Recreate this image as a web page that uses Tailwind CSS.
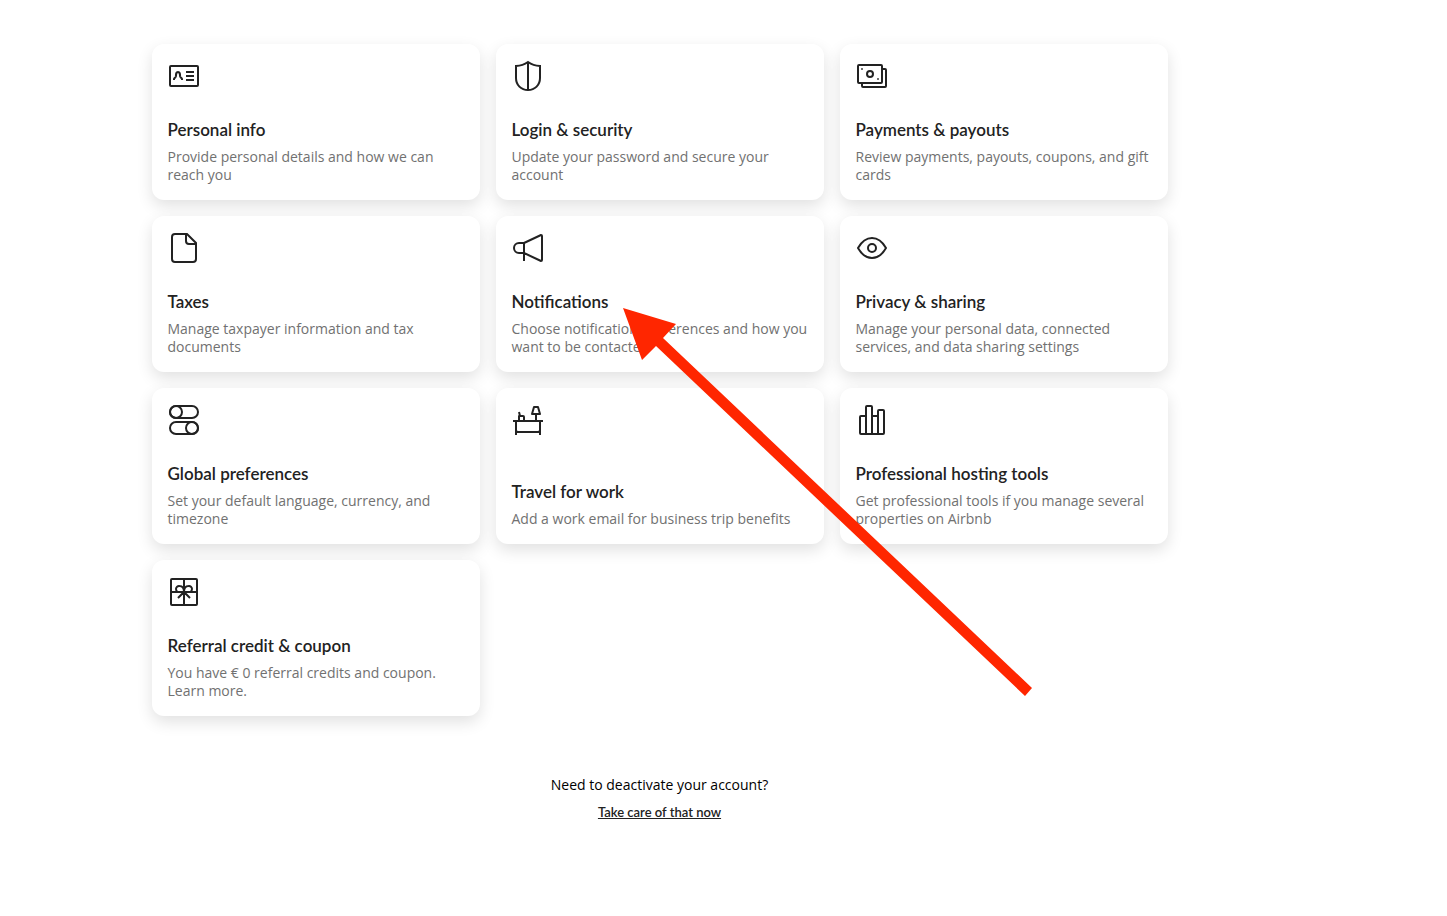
<!DOCTYPE html>
<html lang="en">
<head>
<meta charset="UTF-8">
<meta name="viewport" content="width=device-width, initial-scale=1.0">
<title>Account settings</title>
<script src="https://cdn.jsdelivr.net/npm/@tailwindcss/browser@4"></script>
</head>
<body class="bg-white pr-32 font-['Open_Sans',sans-serif] text-[#222222]">
<main class="relative mx-auto max-w-[1016px] pt-11 pb-24">
  <div class="grid grid-cols-3 gap-4">

    <a href="#" class="flex min-h-39 flex-col justify-between rounded-xl bg-white p-4 shadow-[0_6px_16px_rgba(0,0,0,0.12)]">
      <svg class="size-8" viewBox="0 0 32 32" fill="none" stroke="currentColor" stroke-width="2" aria-hidden="true">
        <rect x="2" y="6" width="28" height="20" rx="1"/>
        <path d="M6 20v-1c0-1 1.700-1.200 1.900-2.600C8 13.500 8 12 10 12s2 1.500 2.100 4.400C12.300 17.800 14 18 14 19v1M18 12h8M18 16h8M18 20h8"/>
      </svg>
      <div>
        <h2 class="font-['Lato',sans-serif] text-[17px]/5 font-semibold">Personal info</h2>
        <p class="mt-2 text-sm/[18px] text-[#717171]">Provide personal details and how we can reach you</p>
      </div>
    </a>

    <a href="#" class="flex min-h-39 flex-col justify-between rounded-xl bg-white p-4 shadow-[0_6px_16px_rgba(0,0,0,0.12)]">
      <svg class="size-8" viewBox="0 0 32 32" fill="none" stroke="currentColor" stroke-width="2" aria-hidden="true">
        <path d="M16 2c-3.500 2.500-7.500 3.800-12 4v12c0 7 5 12 12 12s12-5 12-12V6c-4.500-.2-8.500-1.500-12-4zM16 2v28"/>
      </svg>
      <div>
        <h2 class="font-['Lato',sans-serif] text-[17px]/5 font-semibold">Login &amp; security</h2>
        <p class="mt-2 text-sm/[18px] text-[#717171]">Update your password and secure your account</p>
      </div>
    </a>

    <a href="#" class="flex min-h-39 flex-col justify-between rounded-xl bg-white p-4 shadow-[0_6px_16px_rgba(0,0,0,0.12)]">
      <svg class="size-8" viewBox="0 0 32 32" fill="none" stroke="currentColor" stroke-width="2" aria-hidden="true">
        <rect x="2" y="5" width="24" height="18" rx="1"/>
        <path d="M26 9h3a1 1 0 0 1 1 1v16a1 1 0 0 1-1 1H7a1 1 0 0 1-1-1v-3"/>
        <circle cx="14" cy="14" r="3"/>
        <path d="M5 9h2M21 19h2" stroke="#717171"/>
      </svg>
      <div>
        <h2 class="font-['Lato',sans-serif] text-[17px]/5 font-semibold">Payments &amp; payouts</h2>
        <p class="mt-2 text-sm/[18px] text-[#717171]">Review payments, payouts, coupons, and gift cards</p>
      </div>
    </a>

    <a href="#" class="flex min-h-39 flex-col justify-between rounded-xl bg-white p-4 shadow-[0_6px_16px_rgba(0,0,0,0.12)]">
      <svg class="size-8" viewBox="0 0 32 32" fill="none" stroke="currentColor" stroke-width="2" aria-hidden="true">
        <path d="M19 2H7a3 3 0 0 0-3 3v22a3 3 0 0 0 3 3h18a3 3 0 0 0 3-3V11zM18 2v7a3 3 0 0 0 3 3h7"/>
      </svg>
      <div>
        <h2 class="font-['Lato',sans-serif] text-[17px]/5 font-semibold">Taxes</h2>
        <p class="mt-2 text-sm/[18px] text-[#717171]">Manage taxpayer information and tax documents</p>
      </div>
    </a>

    <a href="#" class="flex min-h-39 flex-col justify-between rounded-xl bg-white p-4 shadow-[0_6px_16px_rgba(0,0,0,0.12)]">
      <svg class="size-8" viewBox="0 0 32 32" fill="none" stroke="currentColor" stroke-width="2" stroke-linejoin="round" aria-hidden="true">
        <path d="M12 11H7a5 5 0 0 0 0 10h5M12 10v19M12 11l17-8a1 1 0 0 1 1 1v24a1 1 0 0 1-1 1l-17-8"/>
      </svg>
      <div>
        <h2 class="font-['Lato',sans-serif] text-[17px]/5 font-semibold">Notifications</h2>
        <p class="mt-2 text-sm/[18px] text-[#717171]">Choose notification preferences and how you want to be contacted</p>
      </div>
    </a>

    <a href="#" class="flex min-h-39 flex-col justify-between rounded-xl bg-white p-4 shadow-[0_6px_16px_rgba(0,0,0,0.12)]">
      <svg class="size-8" viewBox="0 0 32 32" fill="none" stroke="currentColor" stroke-width="2" stroke-linejoin="round" aria-hidden="true">
        <path d="M16 6c5.500 0 10.200 3.300 14 10-3.800 6.700-8.500 10-14 10S5.800 22.700 2 16C5.800 9.300 10.500 6 16 6z"/>
        <circle cx="16" cy="16" r="4"/>
      </svg>
      <div>
        <h2 class="font-['Lato',sans-serif] text-[17px]/5 font-semibold">Privacy &amp; sharing</h2>
        <p class="mt-2 text-sm/[18px] text-[#717171]">Manage your personal data, connected services, and data sharing settings</p>
      </div>
    </a>

    <a href="#" class="flex min-h-39 flex-col justify-between rounded-xl bg-white p-4 shadow-[0_6px_16px_rgba(0,0,0,0.12)]">
      <svg class="size-8" viewBox="0 0 32 32" fill="none" stroke="currentColor" stroke-width="2" aria-hidden="true">
        <rect x="2" y="2" width="28" height="12" rx="6"/>
        <circle cx="8" cy="8" r="6"/>
        <rect x="2" y="18" width="28" height="12" rx="6"/>
        <circle cx="24" cy="24" r="6"/>
      </svg>
      <div>
        <h2 class="font-['Lato',sans-serif] text-[17px]/5 font-semibold">Global preferences</h2>
        <p class="mt-2 text-sm/[18px] text-[#717171]">Set your default language, currency, and timezone</p>
      </div>
    </a>

    <a href="#" class="flex min-h-39 flex-col justify-between rounded-xl bg-white p-4 shadow-[0_6px_16px_rgba(0,0,0,0.12)]">
      <svg class="size-8" viewBox="0 0 32 32" fill="none" stroke="currentColor" stroke-width="2" stroke-linejoin="round" aria-hidden="true">
        <path d="M1 17h30M4 17v14M28 17v14M4 26a2 2 0 0 0 2 2h20a2 2 0 0 0 2-2M7 17v-5h4a1 1 0 0 1 1 1v4M8 12L7 8M24 10v7M22 3h4l2 7h-8z"/>
      </svg>
      <div>
        <h2 class="font-['Lato',sans-serif] text-[17px]/5 font-semibold">Travel for work</h2>
        <p class="mt-2 text-sm/[18px] text-[#717171]">Add a work email for business trip benefits</p>
      </div>
    </a>

    <a href="#" class="flex min-h-39 flex-col justify-between rounded-xl bg-white p-4 shadow-[0_6px_16px_rgba(0,0,0,0.12)]">
      <svg class="size-8" viewBox="0 0 32 32" fill="none" stroke="currentColor" stroke-width="2" stroke-linejoin="round" aria-hidden="true">
        <path d="M4 29V13a1 1 0 0 1 1-1h5M10 30V3a1 1 0 0 1 1-1h4a1 1 0 0 1 1 1v27M16 12h6M22 30V7a1 1 0 0 1 1-1h4a1 1 0 0 1 1 1v22a1 1 0 0 1-1 1H5a1 1 0 0 1-1-1"/>
      </svg>
      <div>
        <h2 class="font-['Lato',sans-serif] text-[17px]/5 font-semibold">Professional hosting tools</h2>
        <p class="mt-2 text-sm/[18px] text-[#717171]">Get professional tools if you manage several properties on Airbnb</p>
      </div>
    </a>

    <a href="#" class="flex min-h-39 flex-col justify-between rounded-xl bg-white p-4 shadow-[0_6px_16px_rgba(0,0,0,0.12)]">
      <svg class="size-8" viewBox="0 0 32 32" fill="none" stroke="currentColor" stroke-width="2" aria-hidden="true">
        <rect x="3" y="3" width="26" height="26" rx="1"/>
        <path d="M16 3v26M3 16h26M10 22l6-6 6 6M16 16c0-4-1.500-6-4.500-6a3 3 0 0 0-3.500 3c0 1.300.6 2.200 1.500 3M16 16c0-4 1.500-6 4.500-6a3 3 0 0 1 3.500 3c0 1.300-.6 2.200-1.500 3"/>
      </svg>
      <div>
        <h2 class="font-['Lato',sans-serif] text-[17px]/5 font-semibold">Referral credit &amp; coupon</h2>
        <p class="mt-2 text-sm/[18px] text-[#717171]">You have € 0 referral credits and coupon. Learn more.</p>
      </div>
    </a>
  </div>

  <div class="mt-15 flex flex-col items-center gap-2 text-center">
    <p class="text-sm/[18px] text-black">Need to deactivate your account?</p>
    <a href="#" class="font-['Lato',sans-serif] text-[13px]/5 font-semibold underline">Take care of that now</a>
  </div>

  <!-- Arrow pointing at the Notifications card -->
  <svg class="pointer-events-none absolute top-77 left-118 h-98 w-103 overflow-visible" viewBox="0 0 412 392" fill="#ff2600" aria-hidden="true">
    <path d="M-1 0L52 16 39 30 408 380 401 388 32 38 18 52z"/>
  </svg>
</main>
</body>
</html>
